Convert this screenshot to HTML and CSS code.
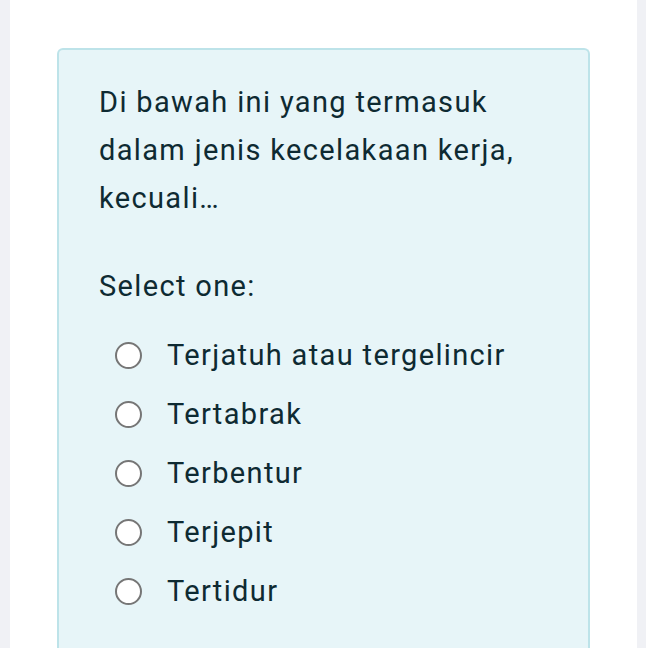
FILE: index.html
```html
<!DOCTYPE html>
<html lang="id">
<head>
<meta charset="utf-8">
<title>Quiz</title>
<link rel="stylesheet" href="styles.css">
</head>
<body>
<div class="page">
  <div class="content">
    <div class="card">
      <p class="question">Di bawah ini yang termasuk dalam jenis kecelakaan kerja, kecuali…</p>
      <p class="prompt">Select one:</p>
      <div class="options">
        <label class="option"><span class="radio"></span><span class="label">Terjatuh atau tergelincir</span></label>
        <label class="option"><span class="radio"></span><span class="label">Tertabrak</span></label>
        <label class="option"><span class="radio"></span><span class="label">Terbentur</span></label>
        <label class="option"><span class="radio"></span><span class="label">Terjepit</span></label>
        <label class="option"><span class="radio"></span><span class="label">Tertidur</span></label>
      </div>
    </div>
  </div>
</div>
</body>
</html>
```
FILE: styles.css
```css
html, body {
  margin: 0;
  padding: 0;
  height: 100%;
  overflow: hidden;
}
body {
  background: #f0f1f5;
  font-family: Roboto, "Noto Sans", sans-serif;
  color: #0e2a32;
}
.page {
  height: 100%;
  padding: 0 9px 0 10px;
}
.content {
  background: #ffffff;
  height: 100%;
  padding: 48px 47px 0 47px;
}
.card {
  background: #e7f5f8;
  border: 2px solid #bde3e9;
  border-bottom: none;
  border-radius: 6px 6px 0 0;
  padding: 28px 30px 40px 40px;
  height: 700px;
}
.question {
  margin: 0;
  font-size: 29px;
  line-height: 48px;
  letter-spacing: 1.35px;
  width: 440px;
}
.prompt {
  margin: 40px 0 0 0;
  font-size: 29px;
  line-height: 48px;
  letter-spacing: 1.35px;
}
.options {
  display: flex;
  flex-direction: column;
  gap: 11px;
  margin-top: 21px;
  padding-left: 16px;
}
.option {
  display: flex;
  align-items: center;
  gap: 25px;
  font-size: 29px;
  line-height: 48px;
  letter-spacing: 1.35px;
}
.radio {
  width: 23px;
  height: 23px;
  border: 2.5px solid #767676;
  border-radius: 50%;
  background: #ffffff;
  flex: none;
}
```
